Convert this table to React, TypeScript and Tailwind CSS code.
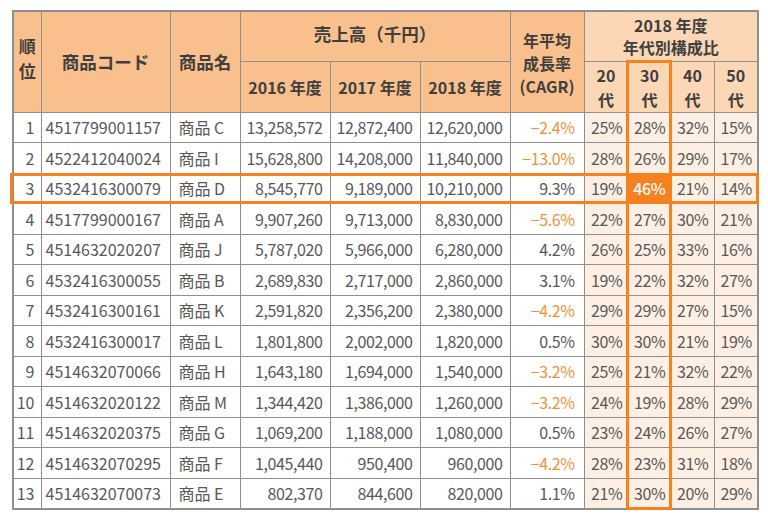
import React from "react";

type Row = {
  rank: number;
  code: string;
  name: string;
  y2016: string;
  y2017: string;
  y2018: string;
  cagr: string;
  ages: string[];
};

const rows: Row[] = [
  { rank: 1, code: "4517799001157", name: "商品 C", y2016: "13,258,572", y2017: "12,872,400", y2018: "12,620,000", cagr: "−2.4%", ages: ["25%", "28%", "32%", "15%"] },
  { rank: 2, code: "4522412040024", name: "商品 I", y2016: "15,628,800", y2017: "14,208,000", y2018: "11,840,000", cagr: "−13.0%", ages: ["28%", "26%", "29%", "17%"] },
  { rank: 3, code: "4532416300079", name: "商品 D", y2016: "8,545,770", y2017: "9,189,000", y2018: "10,210,000", cagr: "9.3%", ages: ["19%", "46%", "21%", "14%"] },
  { rank: 4, code: "4517799000167", name: "商品 A", y2016: "9,907,260", y2017: "9,713,000", y2018: "8,830,000", cagr: "−5.6%", ages: ["22%", "27%", "30%", "21%"] },
  { rank: 5, code: "4514632020207", name: "商品 J", y2016: "5,787,020", y2017: "5,966,000", y2018: "6,280,000", cagr: "4.2%", ages: ["26%", "25%", "33%", "16%"] },
  { rank: 6, code: "4532416300055", name: "商品 B", y2016: "2,689,830", y2017: "2,717,000", y2018: "2,860,000", cagr: "3.1%", ages: ["19%", "22%", "32%", "27%"] },
  { rank: 7, code: "4532416300161", name: "商品 K", y2016: "2,591,820", y2017: "2,356,200", y2018: "2,380,000", cagr: "−4.2%", ages: ["29%", "29%", "27%", "15%"] },
  { rank: 8, code: "4532416300017", name: "商品 L", y2016: "1,801,800", y2017: "2,002,000", y2018: "1,820,000", cagr: "0.5%", ages: ["30%", "30%", "21%", "19%"] },
  { rank: 9, code: "4514632070066", name: "商品 H", y2016: "1,643,180", y2017: "1,694,000", y2018: "1,540,000", cagr: "−3.2%", ages: ["25%", "21%", "32%", "22%"] },
  { rank: 10, code: "4514632020122", name: "商品 M", y2016: "1,344,420", y2017: "1,386,000", y2018: "1,260,000", cagr: "−3.2%", ages: ["24%", "19%", "28%", "29%"] },
  { rank: 11, code: "4514632020375", name: "商品 G", y2016: "1,069,200", y2017: "1,188,000", y2018: "1,080,000", cagr: "0.5%", ages: ["23%", "24%", "26%", "27%"] },
  { rank: 12, code: "4514632070295", name: "商品 F", y2016: "1,045,440", y2017: "950,400", y2018: "960,000", cagr: "−4.2%", ages: ["28%", "23%", "31%", "18%"] },
  { rank: 13, code: "4514632070073", name: "商品 E", y2016: "802,370", y2017: "844,600", y2018: "820,000", cagr: "1.1%", ages: ["21%", "30%", "20%", "29%"] },
];

const th = "border border-[#8f8f8f] bg-[#f9bf8c] font-bold text-[#3f3f3f] text-center align-middle";
const thAge = "border border-[#8f8f8f] bg-[#fcd7b5] font-bold text-[#3f3f3f] text-center align-middle leading-[22px]";
const td = "border border-[#8f8f8f] text-[#585858] whitespace-nowrap";
const num = td + " text-right pl-[2px] pr-[7px] tracking-[-0.4px]";

export default function App() {
  return (
    <div className="h-[519px] w-[768px] bg-white pl-[12px] pt-[10px]" style={{ fontFamily: '"Noto Sans CJK JP", "Noto Sans", sans-serif' }}>
      <div className="relative w-[745px]">
        <table className="w-[745px] table-fixed border-collapse border-2 border-[#8f8f8f] text-[16px]">
          <colgroup>
            <col className="w-[28px]" />
            <col className="w-[129px]" />
            <col className="w-[70px]" />
            <col className="w-[90px]" />
            <col className="w-[90px]" />
            <col className="w-[90px]" />
            <col className="w-[74px]" />
            <col className="w-[44px]" />
            <col className="w-[43px]" />
            <col className="w-[43px]" />
            <col className="w-[44px]" />
          </colgroup>
          <thead>
            <tr className="h-[50px]">
              <th rowSpan={2} className={th + " text-[17px] leading-[25px] px-0 pb-2"}>順<br />位</th>
              <th rowSpan={2} className={th + " text-[17.5px]"}>商品コード</th>
              <th rowSpan={2} className={th + " text-[17.5px]"}>商品名</th>
              <th colSpan={3} className={th + " text-[17.5px] pb-1"}>売上高（千円）</th>
              <th rowSpan={2} className={th + " leading-[23px] pt-1"}>年平均<br />成長率<br />(CAGR)</th>
              <th colSpan={4} className={thAge}>2018 年度<br />年代別構成比</th>
            </tr>
            <tr className="h-[51px]">
              <th className={th + " whitespace-nowrap"}>2016 年度</th>
              <th className={th + " whitespace-nowrap"}>2017 年度</th>
              <th className={th + " whitespace-nowrap"}>2018 年度</th>
              <th className={thAge + " leading-[24px]"}>20<br />代</th>
              <th className={thAge + " leading-[24px]"}>30<br />代</th>
              <th className={thAge + " leading-[24px]"}>40<br />代</th>
              <th className={thAge + " leading-[24px]"}>50<br />代</th>
            </tr>
          </thead>
          <tbody>
            {rows.map((r) => (
              <tr key={r.rank} className="h-[30.5px]">
                <td className={td + " text-right pl-0 pr-[6px]"}>{r.rank}</td>
                <td className={td + " text-left px-[4px]"}>{r.code}</td>
                <td className={td + " text-left px-[8px]"}>{r.name}</td>
                <td className={num}>{r.y2016}</td>
                <td className={num}>{r.y2017}</td>
                <td className={num}>{r.y2018}</td>
                <td className={num + " pr-[9px] " + (r.cagr.startsWith("−") ? "text-[#f0913a]" : "")}>{r.cagr}</td>
                {r.ages.map((a, i) => {
                  const hot = r.rank === 3 && i === 1;
                  return (
                    <td
                      key={i}
                      className={
                        td +
                        " text-right pl-0 pr-[5px] tracking-[-0.3px] " +
                        (hot ? "bg-[#f5821f] font-medium text-white" : "bg-[#fdefe3]")
                      }
                    >
                      {a}
                    </td>
                  );
                })}
              </tr>
            ))}
          </tbody>
        </table>
        <div className="pointer-events-none absolute left-[-2px] top-[163px] h-[31px] w-[749px] border-[3px] border-[#f5821f]" />
        <div className="pointer-events-none absolute left-[614px] top-[50px] h-[450px] w-[46px] border-[3px] border-[#f5821f]" />
      </div>
    </div>
  );
}
